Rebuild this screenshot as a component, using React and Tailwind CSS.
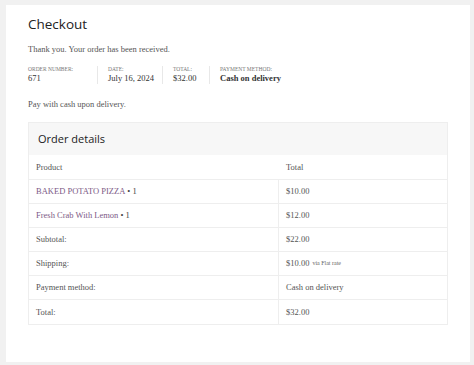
export default function App() {
  const overview = [
    { label: 'ORDER NUMBER:', value: '671', w: 'w-[70px]' },
    { label: 'DATE:', value: 'July 16, 2024', w: 'w-[65px]' },
    { label: 'TOTAL:', value: '$32.00', w: 'w-[47px]' },
    { label: 'PAYMENT METHOD:', value: 'Cash on delivery', w: '', bold: true },
  ];

  const rows = [
    { label: 'Subtotal:', value: '$22.00' },
    { label: 'Shipping:', value: '$10.00', note: 'via Flat rate' },
    { label: 'Payment method:', value: 'Cash on delivery' },
    { label: 'Total:', value: '$32.00' },
  ];

  const items = [
    { name: 'BAKED POTATO PIZZA', total: '$10.00' },
    { name: 'Fresh Crab With Lemon', total: '$12.00' },
  ];

  const serif = "font-['Liberation_Serif',serif]";
  const sans = "font-['Open_Sans',sans-serif]";

  return (
    <div className="min-h-screen w-[474px] h-[365px] bg-[#f1f1f1] pt-[5px] pl-[6px] overflow-hidden">
      <div className={`w-[464px] h-[357px] bg-white pl-[22px] pr-[22px] pt-[9px] ${serif} text-[#555]`}>
        <h1 className={`${sans} text-[13.5px] leading-[20px] text-[#222]`}>Checkout</h1>

        <p className="mt-[9px] text-[8.5px] leading-[12px]">Thank you. Your order has been received.</p>

        <div className="mt-[11px] flex">
          {overview.map((o, i) => (
            <div
              key={o.label}
              className={`${o.w} ${i > 0 ? 'pl-[10px]' : ''} ${i < overview.length - 1 ? 'border-r border-[#e8e8e8]' : ''}`}
            >
              <div className="text-[5.5px] leading-[7px] text-[#777]">{o.label}</div>
              <div className={`text-[8.5px] leading-[11px] text-[#333] ${o.bold ? 'font-bold' : ''}`}>{o.value}</div>
            </div>
          ))}
        </div>

        <p className="mt-[14px] text-[8.5px] leading-[12px]">Pay with cash upon delivery.</p>

        <div className="mt-[12px] w-[420px] border border-[#eeeeee]">
          <div className={`${sans} h-[32px] bg-[#f7f7f7] pl-[9px] flex items-center text-[11px] text-[#222]`}>
            Order details
          </div>
          <div className="h-[25px] flex items-center text-[8.5px] border-b border-[#eeeeee]">
            <div className="w-[250px] pl-[7px]">Product</div>
            <div className="pl-[7px]">Total</div>
          </div>
          {items.map((it) => (
            <div key={it.name} className="h-[24px] flex text-[8.5px] border-b border-[#eeeeee]">
              <div className="w-[250px] pl-[7px] flex items-center border-r border-[#eeeeee]">
                <span className="text-[#7d5a86]">{it.name}</span>
                <span className="ml-[2px] text-[#444]">• 1</span>
              </div>
              <div className="pl-[7px] flex items-center">{it.total}</div>
            </div>
          ))}
          {rows.map((r, i) => (
            <div
              key={r.label}
              className={`h-[24px] flex text-[8.5px] ${i < rows.length - 1 ? 'border-b border-[#eeeeee]' : ''}`}
            >
              <div className="w-[250px] pl-[7px] flex items-center border-r border-[#eeeeee]">{r.label}</div>
              <div className="pl-[7px] flex items-center">
                {r.value}
                {r.note && <span className="ml-[3px] text-[6px] text-[#666]">{r.note}</span>}
              </div>
            </div>
          ))}
        </div>
      </div>
    </div>
  );
}
